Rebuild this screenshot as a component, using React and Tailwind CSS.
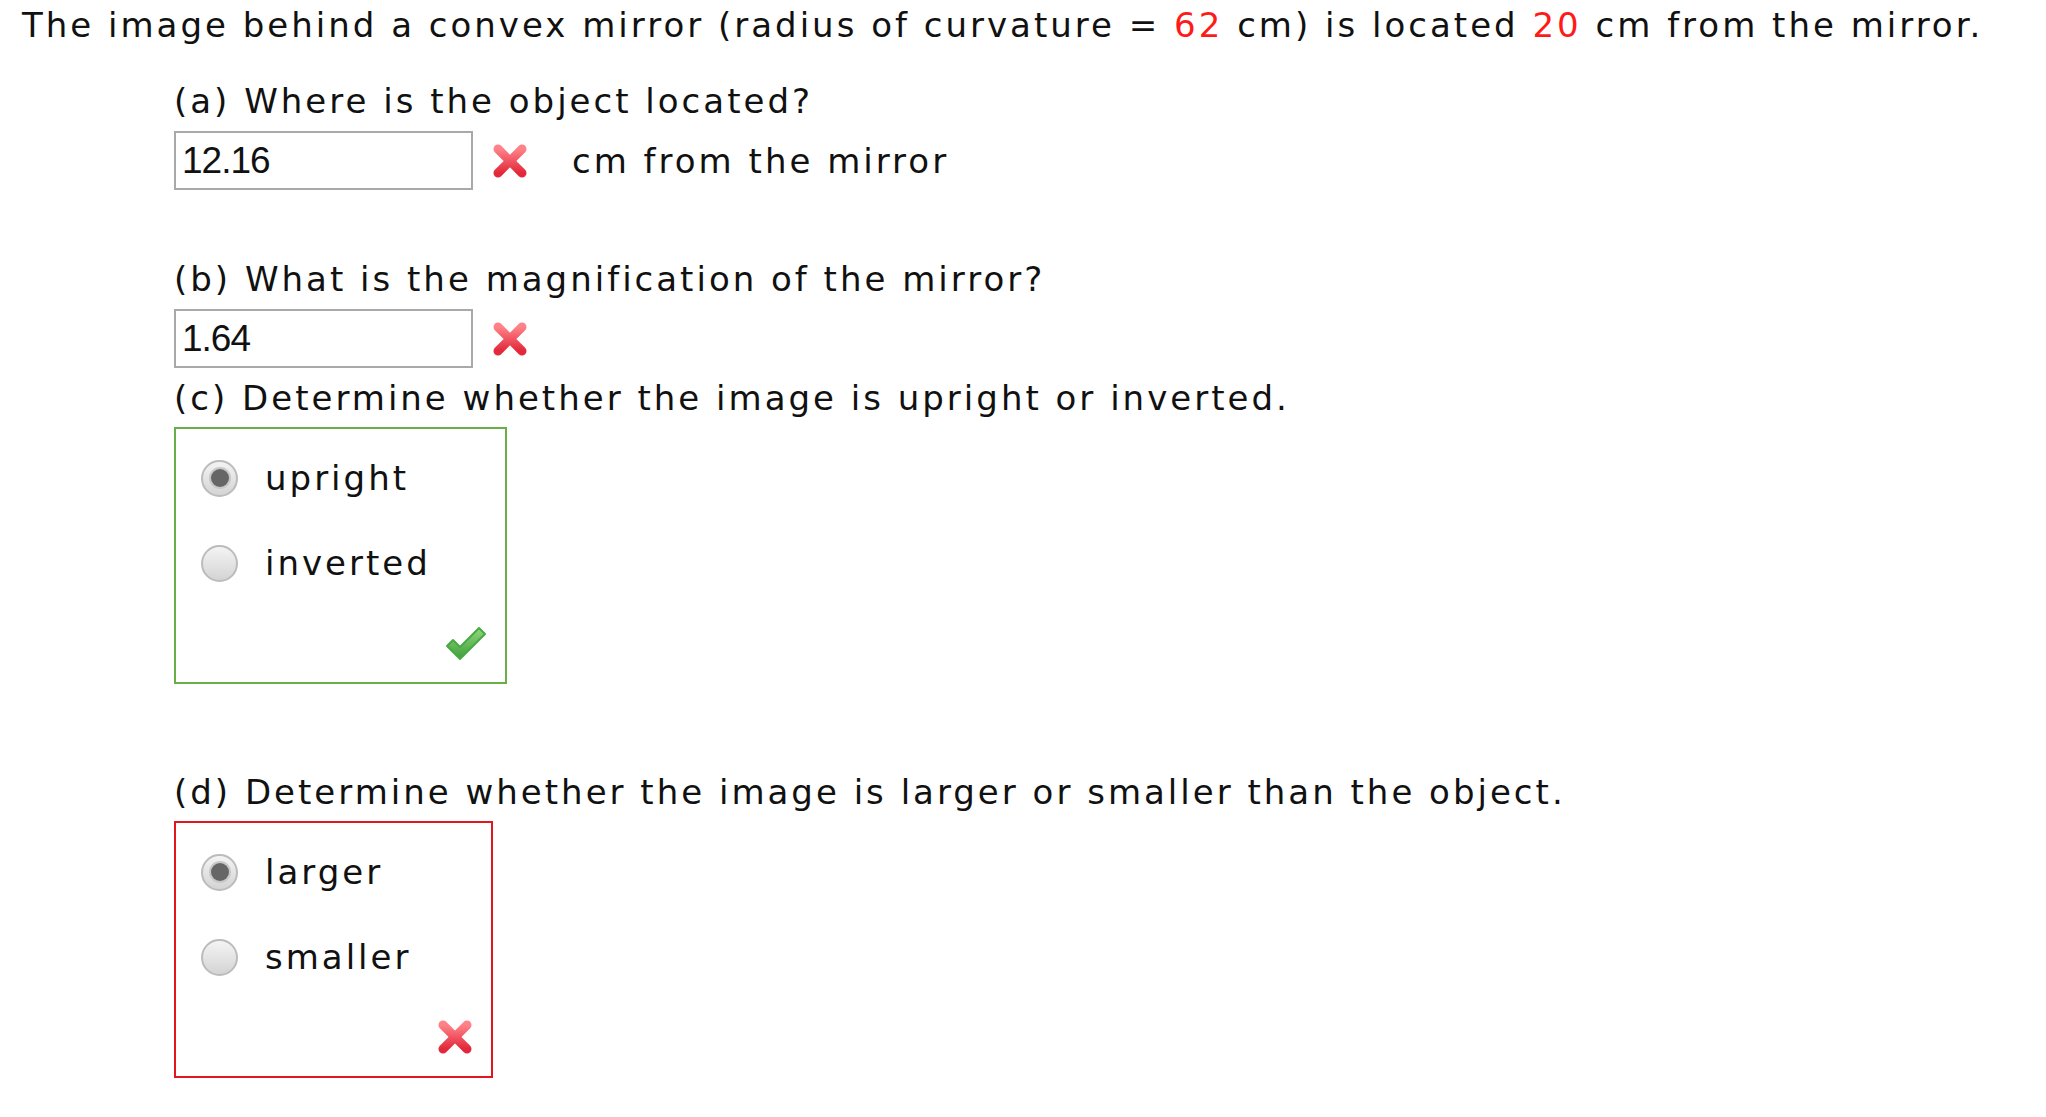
import React from "react";

function WrongMark({ className = "" }) {
  return (
    <svg viewBox="0 0 40 40" className={className}>
      <defs>
        <linearGradient id="xg" x1="0" y1="0" x2="0" y2="1">
          <stop offset="0" stopColor="#ff8288" />
          <stop offset="1" stopColor="#e2283a" />
        </linearGradient>
      </defs>
      <g stroke="url(#xg)" strokeWidth="9" strokeLinecap="round">
        <line x1="8" y1="8" x2="32" y2="32" />
        <line x1="32" y1="8" x2="8" y2="32" />
      </g>
    </svg>
  );
}

function RightMark({ className = "" }) {
  return (
    <svg viewBox="0 0 46 38" className={className}>
      <defs>
        <linearGradient id="cg" x1="0" y1="0" x2="0" y2="1">
          <stop offset="0" stopColor="#8fd87d" />
          <stop offset="1" stopColor="#3f9e3a" />
        </linearGradient>
      </defs>
      <path
        d="M4 22 L10 16 L17 23 L36 4 L42 10 L17 35 Z"
        fill="url(#cg)"
        stroke="#4aa845"
        strokeWidth="2"
        strokeLinejoin="round"
      />
    </svg>
  );
}

function Radio({ checked }) {
  return (
    <div className="w-[37px] h-[37px] rounded-full border-2 border-[#bcbcbc] bg-gradient-to-b from-[#f4f4f4] to-[#d4d4d4] flex items-center justify-center shrink-0">
      {checked && (
        <div className="w-[18px] h-[18px] rounded-full bg-[#666] ring-2 ring-[#c8c8c8]" />
      )}
    </div>
  );
}

function ChoiceBox({ options, selected, correct, width }) {
  return (
    <div
      className={`relative h-[257px] ${width} border-2 ${
        correct ? "border-[#6aae48]" : "border-[#e3161f]"
      } pt-[28px] pl-[25px]`}
    >
      <div className="flex flex-col gap-[43px]">
        {options.map((o) => (
          <label key={o} className="flex items-center gap-[27px] h-[42px]">
            <Radio checked={o === selected} />
            <span>{o}</span>
          </label>
        ))}
      </div>
      {correct ? (
        <RightMark className="absolute right-[16px] bottom-[20px] w-[46px] h-[38px]" />
      ) : (
        <WrongMark className="absolute right-[16px] bottom-[19px] w-[40px] h-[40px]" />
      )}
    </div>
  );
}

function AnswerInput({ value }) {
  return (
    <div className="w-[299px] h-[59px] border-2 border-[#a9a9a9] bg-white flex items-center pl-[6px] text-[37px] text-[#111] tracking-[-1px] font-['Liberation_Sans',Arial,sans-serif]">
      {value}
    </div>
  );
}

export default function App() {
  return (
    <div className="min-h-screen bg-white text-[#111] font-['DejaVu_Sans',Verdana,sans-serif] text-[34px] leading-[42px] tracking-[3px] pt-[4px]">
      <p className="pl-[22px]">
        The image behind a convex mirror (radius of curvature ={" "}
        <span className="text-[#ff1a1a]">62</span> cm) is located{" "}
        <span className="text-[#ff1a1a]">20</span> cm from the mirror.
      </p>

      <div className="pl-[174px]">
        <p className="mt-[34px]">(a) Where is the object located?</p>
        <div className="flex items-center mt-[9px]">
          <AnswerInput value="12.16" />
          <WrongMark className="w-[40px] h-[40px] ml-[17px]" />
          <span className="ml-[42px]">cm from the mirror</span>
        </div>

        <p className="mt-[68px]">(b) What is the magnification of the mirror?</p>
        <div className="flex items-center mt-[9px]">
          <AnswerInput value="1.64" />
          <WrongMark className="w-[40px] h-[40px] ml-[17px]" />
        </div>

        <p className="mt-[9px]">(c) Determine whether the image is upright or inverted.</p>
        <div className="mt-[8px]">
          <ChoiceBox
            options={["upright", "inverted"]}
            selected="upright"
            correct
            width="w-[333px]"
          />
        </div>

        <p className="mt-[87px]">(d) Determine whether the image is larger or smaller than the object.</p>
        <div className="mt-[8px]">
          <ChoiceBox
            options={["larger", "smaller"]}
            selected="larger"
            correct={false}
            width="w-[319px]"
          />
        </div>
      </div>
    </div>
  );
}
